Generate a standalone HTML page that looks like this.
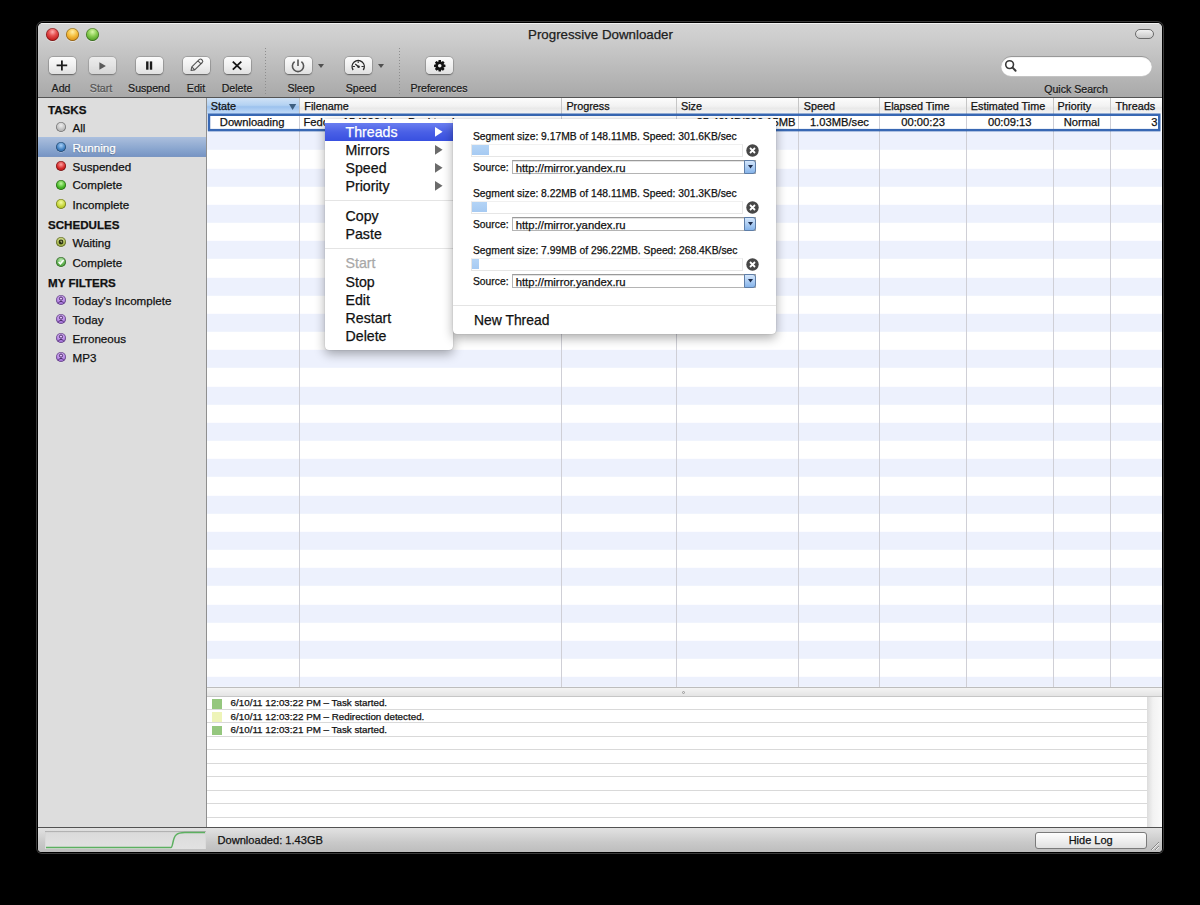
<!DOCTYPE html>
<html><head><meta charset="utf-8">
<style>
*{margin:0;padding:0;box-sizing:border-box}
html,body{width:1200px;height:905px;background:#000;overflow:hidden;font-family:"Liberation Sans",sans-serif;color:#111}
#win div{-webkit-text-stroke:0.25px currentColor}
.a{position:absolute}
.t{position:absolute;white-space:nowrap}
#win{position:absolute;left:38px;top:23px;width:1124px;height:829px;border-radius:5px 5px 4px 4px;overflow:hidden;background:#dedede;box-shadow:0 0 0 1px #000,0 0 0 2px #3a3a3a}
#tb{position:absolute;left:0;top:0;width:1124px;height:75px;background:linear-gradient(#d4d4d4,#cdcdcd 20%,#a9a9a9);border-top:1px solid #f2f2f2;border-bottom:1px solid #545454}
.light{position:absolute;width:13px;height:13px;border-radius:50%;box-shadow:inset 0 0 0 0.8px rgba(0,0,0,.35),0 1px 0 rgba(255,255,255,.5)}
.btn{position:absolute;width:27px;height:17px;border-radius:4px;background:linear-gradient(#fbfbfb,#f0f0f0 50%,#e0e0e0);box-shadow:0 0 0 0.6px rgba(0,0,0,.22),0 0.6px 1.4px rgba(0,0,0,.4)}
.lbl{position:absolute;font-size:10.6px;line-height:14px;text-align:center;color:#1a1a1a;white-space:nowrap;text-shadow:0 1px 0 rgba(255,255,255,.45)}
.sep{position:absolute;top:24px;width:1px;height:48px;background:repeating-linear-gradient(#8e8e8e 0 1px,transparent 1px 3px)}
#side{position:absolute;left:0;top:75px;width:169px;height:729px;background:#dddddd;border-right:1px solid #8f8f8f}
.sh{position:absolute;left:10px;font-size:11.6px;font-weight:bold;line-height:14px;color:#111}
.si{position:absolute;left:34.5px;font-size:11.6px;line-height:14px;color:#111}
.gel{position:absolute;left:18px;width:10px;height:10px;border-radius:50%;box-shadow:inset 0 0 0 0.8px rgba(0,0,0,.35),0 0.5px 0.5px rgba(255,255,255,.6)}
#hdr{position:absolute;left:169px;top:75px;width:955px;height:16px;background:linear-gradient(#fdfdfd,#f2f2f2 50%,#e9e9e9 65%,#f6f6f6)}
.hc{position:absolute;top:0;height:16px;border-right:1px solid #c9c9c9}
.ht{position:absolute;font-size:10.8px;line-height:14px;color:#111;white-space:nowrap}
#rows{position:absolute;left:169px;top:91px;width:955px;height:573px;background:repeating-linear-gradient(#fff 0,#fff 18.17px,#edf1fd 18.17px,#edf1fd 36.34px);background-position:0 -0.2px}
.vl{position:absolute;top:0;width:1px;height:573px;background:#cfcfd6}
.rt{position:absolute;font-size:11.2px;line-height:14px;color:#111;white-space:nowrap}
#menu{position:absolute;left:287px;top:96.3px;width:127.7px;height:231px;background:#fff;border-radius:0 0 4px 4px;box-shadow:0 4px 11px rgba(0,0,0,.33),0 0 1px rgba(0,0,0,.35)}
.mi{position:absolute;left:20.5px;font-size:14.2px;line-height:16px;color:#111;white-space:nowrap}
.arr{position:absolute;left:110px;width:0;height:0;border-top:4.5px solid transparent;border-bottom:4.5px solid transparent;border-left:7.5px solid #6b6b6b}
.msep{position:absolute;left:0;width:128px;height:1px;background:#e4e4e4}
#sub{position:absolute;left:415px;top:96.3px;width:323px;height:214.8px;background:#fff;border-radius:0 0 4px 4px;box-shadow:0 4px 11px rgba(0,0,0,.33),0 0 1px rgba(0,0,0,.35)}
.seg{position:absolute;left:20px;font-size:10.3px;line-height:12px;color:#111;white-space:nowrap}
.pb{position:absolute;left:18.3px;width:272px;height:12.5px;background:#fff;border:1px solid #e6e6e6;border-top-color:#f0f0f0}
.pf{position:absolute;left:0;top:0;height:9.6px;background:linear-gradient(#b4d4f6,#a6caf2)}
.xc{position:absolute;left:293px;width:12px;height:12px;border-radius:50%;background:#474747;color:#fff;font-size:11px;line-height:12px;text-align:center;font-weight:bold}
.src{position:absolute;left:20px;font-size:10.3px;line-height:12px;color:#111}
.dd{position:absolute;left:58.5px;width:244px;height:14px;border:1px solid #b4b4b4;border-top:1.5px solid #9a9a9a;background:#fff;box-shadow:inset 0 1px 0 #e4e4e4}
.ddt{position:absolute;left:3.2px;top:0;font-size:11.3px;line-height:14px;color:#111;white-space:nowrap}
.dda{position:absolute;right:-1px;top:-1px;width:12px;height:14px;border-radius:0 3px 3px 0;background:linear-gradient(#d4e6fb,#86b4ea);border:1px solid #5e7ea8}
#split{position:absolute;left:169px;top:664px;width:955px;height:10px;background:linear-gradient(#f4f4f4,#e4e4e4);border-top:1px solid #bdbdbd;border-bottom:1px solid #c6c6c6}
#log{position:absolute;left:169px;top:674px;width:955px;height:130px;background:#fff}
.ll{position:absolute;left:0;width:940px;height:1px;background:#d9d9d9}
.lt{position:absolute;left:23.6px;font-size:9.8px;line-height:12px;color:#111;white-space:nowrap}
.lsq{position:absolute;left:5px;width:10px;height:9.5px}
#status{position:absolute;left:0;top:804px;width:1124px;height:25px;background:linear-gradient(#e2e2e2,#c9c9c9 60%,#bdbdbd);border-top:1px solid #525252}
</style></head><body>
<div id="win">
  <div id="tb">
    <div class="light" style="left:8px;top:3.5px;background:radial-gradient(circle at 50% 30%,#ffb0b0 0,#e55050 35%,#c01818 75%,#8a1010 100%)"></div>
    <div class="light" style="left:28px;top:3.5px;background:radial-gradient(circle at 50% 30%,#fff0a8 0,#f5c040 40%,#d88a10 80%,#9a6008 100%)"></div>
    <div class="light" style="left:48px;top:3.5px;background:radial-gradient(circle at 50% 30%,#d8f8a8 0,#88cc50 40%,#4a9a20 80%,#2e6a10 100%)"></div>
    <div class="t" style="left:0;width:1124px;text-align:center;top:2px;font-size:13.3px;line-height:18px;color:#202020;padding-left:1px">Progressive Downloader</div>
    <div class="a" style="left:1097px;top:5.3px;width:19px;height:9.6px;border-radius:5px;border:1px solid #6a6a6a;background:linear-gradient(#f0f0f0,#c8c8c8)"></div>

    <div class="btn" style="left:11px;top:33px"></div>
    <div class="btn" style="left:51px;top:33px;opacity:.75"></div>
    <div class="btn" style="left:98px;top:33px"></div>
    <div class="btn" style="left:144.5px;top:33px"></div>
    <div class="btn" style="left:186px;top:33px"></div>
    <div class="sep" style="left:227px"></div>
    <div class="btn" style="left:247px;top:33px"></div>
    <div class="a" style="left:280px;top:40px;width:0;height:0;border-left:3.5px solid transparent;border-right:3.5px solid transparent;border-top:4px solid #505050"></div>
    <div class="btn" style="left:307px;top:33px"></div>
    <div class="a" style="left:340px;top:40px;width:0;height:0;border-left:3.5px solid transparent;border-right:3.5px solid transparent;border-top:4px solid #505050"></div>
    <div class="sep" style="left:361px"></div>
    <div class="btn" style="left:388px;top:33px"></div>


    <svg class="a" style="left:0;top:0" width="1124" height="74" viewBox="0 0 1124 74">
      <path d="M18.6 41.4 H29.2 M23.9 36.4 V46.4" stroke="#1c1c1c" stroke-width="1.8" fill="none"/>
      <path d="M61.4 38.3 L67.9 42 L61.4 45.8 Z" fill="#5a5a5a"/>
      <rect x="108.1" y="37.4" width="2.4" height="8.3" fill="#1a1a1a"/>
      <rect x="111.8" y="37.4" width="2.4" height="8.3" fill="#1a1a1a"/>
      <path d="M153 46.5 L153.8 42.8 L161.4 35.4 Q162.6 34.5 163.6 35.5 L164.4 36.3 Q165.3 37.4 164.3 38.5 L156.7 45.9 Z M153.8 42.8 L156.7 45.9 M160 36.8 L163 39.8" stroke="#555" stroke-width="1.1" fill="none" stroke-linejoin="round"/>
      <path d="M194.8 37.6 L203.3 45.6 M203.3 37.6 L194.8 45.6" stroke="#151515" stroke-width="1.8" fill="none"/>
      <path d="M256.6 37.6 A5.6 5.6 0 1 0 263.4 37.6" stroke="#555" stroke-width="1.6" fill="none"/>
      <path d="M260 35.6 V42" stroke="#555" stroke-width="1.6" fill="none"/>
      <path d="M315.1 46 A6.1 6.1 0 1 1 325.3 46" stroke="#2a2a2a" stroke-width="1.4" fill="none"/>
      <path d="M314.6 42.5 H316.9 M323.5 42.5 H325.8 M320.2 37.3 V38.9" stroke="#2a2a2a" stroke-width="1.1" fill="none"/>
      <path d="M317.2 40.1 L320.6 42.7" stroke="#2a2a2a" stroke-width="1.3" fill="none"/>
      <circle cx="320.6" cy="42.7" r="1.3" fill="#2a2a2a"/>
      <path d="M407.43 40.65 L407.43 42.95 L405.68 43.28 L405.58 43.53 L406.58 45.00 L404.95 46.63 L403.48 45.63 L403.23 45.73 L402.90 47.48 L400.60 47.48 L400.27 45.73 L400.02 45.63 L398.55 46.63 L396.92 45.00 L397.92 43.53 L397.82 43.28 L396.07 42.95 L396.07 40.65 L397.82 40.32 L397.92 40.07 L396.92 38.60 L398.55 36.97 L400.02 37.97 L400.27 37.87 L400.60 36.12 L402.90 36.12 L403.23 37.87 L403.48 37.97 L404.95 36.97 L406.58 38.60 L405.58 40.07 L405.68 40.32 Z M403.55 41.8 A1.8 1.8 0 1 0 399.95 41.8 A1.8 1.8 0 1 0 403.55 41.8 Z" fill="#111" fill-rule="evenodd"/>
    </svg>
    <div class="lbl" style="left:3px;width:40px;top:57.4px">Add</div>
    <div class="lbl" style="left:43px;width:40px;top:57.4px;color:#555">Start</div>
    <div class="lbl" style="left:80px;width:62px;top:57.4px">Suspend</div>
    <div class="lbl" style="left:138px;width:40px;top:57.4px">Edit</div>
    <div class="lbl" style="left:179px;width:40px;top:57.4px">Delete</div>
    <div class="lbl" style="left:243px;width:40px;top:57.4px">Sleep</div>
    <div class="lbl" style="left:303px;width:40px;top:57.4px">Speed</div>
    <div class="lbl" style="left:361px;width:80px;top:57.4px">Preferences</div>

    <div class="a" style="left:963px;top:31.5px;width:151px;height:20.5px;border-radius:10px;background:#fff;box-shadow:inset 0 1px 1px rgba(0,0,0,.45),0 0.5px 0 rgba(255,255,255,.4)"></div>
    <svg class="a" style="left:0;top:0" width="1124" height="74" viewBox="0 0 1124 74">
      <circle cx="971.6" cy="40.6" r="3.9" stroke="#3a3a3a" stroke-width="1.6" fill="none"/>
      <path d="M974.6 43.6 L977.6 46.7" stroke="#3a3a3a" stroke-width="2" fill="none" stroke-linecap="round"/>
    </svg>
    <div class="lbl" style="left:998px;width:80px;top:57.9px">Quick Search</div>
  </div>

  <div id="side">
<div class="sh" style="top:5.4px">TASKS</div>
<div class="a" style="left:0;top:39.0px;width:168px;height:20px;background:linear-gradient(#a9bddc,#8aa6cf 60%,#7895c4);border-top:1px solid #a9bfdf;border-bottom:1px solid #7a96c2"></div>
<div class="gel" style="top:24.4px;background:radial-gradient(circle at 50% 35%,#eeeeee 0,#c0c0c0 50%,#929292 100%)"></div><div class="si" style="top:23.2px;color:#111;">All</div>
<div class="gel" style="top:43.8px;background:radial-gradient(circle at 50% 35%,#a8d0f8 0,#4080c0 50%,#245088 100%)"></div><div class="si" style="top:42.6px;color:#fff;text-shadow:0 1px 1px rgba(0,0,0,.35);">Running</div>
<div class="gel" style="top:62.9px;background:radial-gradient(circle at 50% 35%,#ffa0a0 0,#d42828 50%,#8a1010 100%)"></div><div class="si" style="top:61.7px;color:#111;">Suspended</div>
<div class="gel" style="top:81.6px;background:radial-gradient(circle at 50% 35%,#c0f8a0 0,#48b828 50%,#247810 100%)"></div><div class="si" style="top:80.4px;color:#111;">Complete</div>
<div class="gel" style="top:100.8px;background:radial-gradient(circle at 50% 35%,#f4fca0 0,#c4d438 50%,#80900e 100%)"></div><div class="si" style="top:99.6px;color:#111;">Incomplete</div>
<div class="sh" style="top:120.0px">SCHEDULES</div>
<div class="gel" style="top:139.4px;background:radial-gradient(circle at 50% 35%,#e8f0b0 0,#a8b850 50%,#6a7a20 100%)"></div><div class="si" style="top:138.2px;color:#111;">Waiting</div><svg class="a" style="left:18px;top:139.4px" width="10" height="10" viewBox="0 0 10 10"><circle cx="5" cy="5" r="2.4" fill="#2a3010"/><path d="M5 3.6 V5 H6.2" stroke="#e0e8a0" stroke-width=".8" fill="none"/></svg>
<div class="gel" style="top:158.7px;background:radial-gradient(circle at 50% 35%,#c8f0c0 0,#60b050 50%,#308a20 100%)"></div><div class="si" style="top:157.5px;color:#111;">Complete</div><svg class="a" style="left:18px;top:158.7px" width="10" height="10" viewBox="0 0 10 10"><path d="M2.6 5 L4.4 6.8 L7.6 3" stroke="#fff" stroke-width="1.5" fill="none"/></svg>
<div class="sh" style="top:177.5px">MY FILTERS</div>
<div class="gel" style="top:196.9px;background:radial-gradient(circle at 50% 35%,#ecd0ff 0,#b080e0 50%,#7a48b0 100%)"></div><div class="si" style="top:195.8px;color:#111;">Today's Incomplete</div><svg class="a" style="left:18px;top:196.9px" width="10" height="10" viewBox="0 0 10 10"><circle cx="5" cy="3.6" r="1.6" fill="none" stroke="#4a2a6a" stroke-width="1"/><path d="M2.2 8.2 Q5 4.6 7.8 8.2" fill="none" stroke="#4a2a6a" stroke-width="1"/></svg>
<div class="gel" style="top:215.7px;background:radial-gradient(circle at 50% 35%,#ecd0ff 0,#b080e0 50%,#7a48b0 100%)"></div><div class="si" style="top:214.5px;color:#111;">Today</div><svg class="a" style="left:18px;top:215.7px" width="10" height="10" viewBox="0 0 10 10"><circle cx="5" cy="3.6" r="1.6" fill="none" stroke="#4a2a6a" stroke-width="1"/><path d="M2.2 8.2 Q5 4.6 7.8 8.2" fill="none" stroke="#4a2a6a" stroke-width="1"/></svg>
<div class="gel" style="top:234.9px;background:radial-gradient(circle at 50% 35%,#ecd0ff 0,#b080e0 50%,#7a48b0 100%)"></div><div class="si" style="top:233.8px;color:#111;">Erroneous</div><svg class="a" style="left:18px;top:234.9px" width="10" height="10" viewBox="0 0 10 10"><circle cx="5" cy="3.6" r="1.6" fill="none" stroke="#4a2a6a" stroke-width="1"/><path d="M2.2 8.2 Q5 4.6 7.8 8.2" fill="none" stroke="#4a2a6a" stroke-width="1"/></svg>
<div class="gel" style="top:254.2px;background:radial-gradient(circle at 50% 35%,#ecd0ff 0,#b080e0 50%,#7a48b0 100%)"></div><div class="si" style="top:253.0px;color:#111;">MP3</div><svg class="a" style="left:18px;top:254.2px" width="10" height="10" viewBox="0 0 10 10"><circle cx="5" cy="3.6" r="1.6" fill="none" stroke="#4a2a6a" stroke-width="1"/><path d="M2.2 8.2 Q5 4.6 7.8 8.2" fill="none" stroke="#4a2a6a" stroke-width="1"/></svg>
  </div>
  <div id="hdr">
<div class="a" style="left:0;top:0;width:92.4px;height:16px;background:linear-gradient(#d0e2f6,#b4d2f2 45%,#9cc2ee 55%,#c4dcf8)"></div>
<svg class="a" style="left:81.6px;top:5.9px" width="8" height="7"><path d="M0 0 H7.2 L3.6 5.9 Z" fill="#3d5f80"/></svg>
<div class="a" style="left:92.00px;top:0;width:1px;height:16px;background:#c6c6c6"></div>
<div class="a" style="left:353.75px;top:0;width:1px;height:16px;background:#c6c6c6"></div>
<div class="a" style="left:468.75px;top:0;width:1px;height:16px;background:#c6c6c6"></div>
<div class="a" style="left:590.75px;top:0;width:1px;height:16px;background:#c6c6c6"></div>
<div class="a" style="left:671.50px;top:0;width:1px;height:16px;background:#c6c6c6"></div>
<div class="a" style="left:758.80px;top:0;width:1px;height:16px;background:#c6c6c6"></div>
<div class="a" style="left:845.60px;top:0;width:1px;height:16px;background:#c6c6c6"></div>
<div class="a" style="left:903.10px;top:0;width:1px;height:16px;background:#c6c6c6"></div>
<div class="ht" style="left:3.7px;top:0.65px">State</div>
<div class="ht" style="left:97.3px;top:0.65px">Filename</div>
<div class="ht" style="left:359.4px;top:0.65px">Progress</div>
<div class="ht" style="left:474.0px;top:0.65px">Size</div>
<div class="ht" style="left:596.7px;top:0.65px">Speed</div>
<div class="ht" style="left:677.0px;top:0.65px">Elapsed Time</div>
<div class="ht" style="left:763.8px;top:0.65px">Estimated Time</div>
<div class="ht" style="left:850.5px;top:0.65px">Priority</div>
<div class="ht" style="left:908.5px;top:0.65px">Threads</div>
  </div>
  <div id="rows">
<div class="vl" style="left:92.00px"></div>
<div class="vl" style="left:353.75px"></div>
<div class="vl" style="left:468.75px"></div>
<div class="vl" style="left:590.75px"></div>
<div class="vl" style="left:671.50px"></div>
<div class="vl" style="left:758.80px"></div>
<div class="vl" style="left:845.60px"></div>
<div class="vl" style="left:903.10px"></div>
<div class="rt" style="left:12.8px;top:0.80px">Downloading</div>
<div class="rt" style="left:96.5px;top:0.80px">Fedora-15-i386-Live-Desktop.iso</div>
<div class="rt" style="left:470.2px;width:118.3px;text-align:right;top:0.80px">25.46MB/296.15MB</div>
<div class="rt" style="left:591.9px;width:81.1px;text-align:center;top:0.80px">1.03MB/sec</div>
<div class="rt" style="left:673.0px;width:86.2px;text-align:center;top:0.80px">00:00:23</div>
<div class="rt" style="left:759.2px;width:87.0px;text-align:center;top:0.80px">00:09:13</div>
<div class="rt" style="left:846.2px;width:57.2px;text-align:center;top:0.80px">Normal</div>
<div class="rt" style="left:903.5px;width:47.0px;text-align:right;top:0.80px">3</div>
<svg class="a" style="left:-7px;top:-4px" width="970" height="30"><rect x="9.00" y="4.75" width="950.25" height="15.40" fill="none" stroke="#3868b4" stroke-width="2.5"/></svg>
  </div>
  <div id="menu">
<div class="a" style="left:0;top:3.90px;width:100%;height:17.55px;background:linear-gradient(#6a7ef0,#4a60e6 50%,#3850e0)"></div>
<div class="mi" style="top:4.30px;color:#fff">Threads</div>
<svg class="a" style="left:109.70px;top:7.85px" width="9" height="10"><path d="M0 0 L7.6 4.85 L0 9.7 Z" fill="#fff"/></svg>
<div class="mi" style="top:22.30px;color:#111">Mirrors</div>
<svg class="a" style="left:109.70px;top:25.85px" width="9" height="10"><path d="M0 0 L7.6 4.85 L0 9.7 Z" fill="#6b6b6b"/></svg>
<div class="mi" style="top:40.40px;color:#111">Speed</div>
<svg class="a" style="left:109.70px;top:43.95px" width="9" height="10"><path d="M0 0 L7.6 4.85 L0 9.7 Z" fill="#6b6b6b"/></svg>
<div class="mi" style="top:58.50px;color:#111">Priority</div>
<svg class="a" style="left:109.70px;top:62.05px" width="9" height="10"><path d="M0 0 L7.6 4.85 L0 9.7 Z" fill="#6b6b6b"/></svg>
<div class="mi" style="top:88.30px;color:#111">Copy</div>
<div class="mi" style="top:106.60px;color:#111">Paste</div>
<div class="mi" style="top:136.10px;color:#a8a8a8">Start</div>
<div class="mi" style="top:154.70px;color:#111">Stop</div>
<div class="mi" style="top:172.40px;color:#111">Edit</div>
<div class="mi" style="top:190.40px;color:#111">Restart</div>
<div class="mi" style="top:208.60px;color:#111">Delete</div>
<div class="msep" style="top:81.20px"></div>
<div class="msep" style="top:128.80px"></div>
  </div>
  <div id="sub">
<div class="seg" style="top:11.70px">Segment size: 9.17MB of 148.11MB. Speed: 301.6KB/sec</div>
<div class="pb" style="top:24.95px"><div class="pf" style="width:17.2px"></div></div>
<svg class="a" style="left:292.50px;top:24.30px" width="13" height="13"><circle cx="6.5" cy="6.5" r="6.2" fill="#474747"/><path d="M4 4 L9 9 M9 4 L4 9" stroke="#fff" stroke-width="1.8"/></svg>
<div class="src" style="top:42.60px">Source:</div>
<div class="dd" style="top:40.30px"><div class="ddt">http://mirror.yandex.ru</div><div class="dda"><svg class="a" style="left:3px;top:4.5px" width="6" height="5"><path d="M0 0 H5 L2.5 3.5 Z" fill="#1a2a4a"/></svg></div></div>
<div class="seg" style="top:68.70px">Segment size: 8.22MB of 148.11MB. Speed: 301.3KB/sec</div>
<div class="pb" style="top:81.95px"><div class="pf" style="width:15px"></div></div>
<svg class="a" style="left:292.50px;top:81.30px" width="13" height="13"><circle cx="6.5" cy="6.5" r="6.2" fill="#474747"/><path d="M4 4 L9 9 M9 4 L4 9" stroke="#fff" stroke-width="1.8"/></svg>
<div class="src" style="top:99.60px">Source:</div>
<div class="dd" style="top:97.30px"><div class="ddt">http://mirror.yandex.ru</div><div class="dda"><svg class="a" style="left:3px;top:4.5px" width="6" height="5"><path d="M0 0 H5 L2.5 3.5 Z" fill="#1a2a4a"/></svg></div></div>
<div class="seg" style="top:125.70px">Segment size: 7.99MB of 296.22MB. Speed: 268.4KB/sec</div>
<div class="pb" style="top:138.95px"><div class="pf" style="width:6.5px"></div></div>
<svg class="a" style="left:292.50px;top:138.30px" width="13" height="13"><circle cx="6.5" cy="6.5" r="6.2" fill="#474747"/><path d="M4 4 L9 9 M9 4 L4 9" stroke="#fff" stroke-width="1.8"/></svg>
<div class="src" style="top:156.60px">Source:</div>
<div class="dd" style="top:154.30px"><div class="ddt">http://mirror.yandex.ru</div><div class="dda"><svg class="a" style="left:3px;top:4.5px" width="6" height="5"><path d="M0 0 H5 L2.5 3.5 Z" fill="#1a2a4a"/></svg></div></div>
<div class="msep" style="top:185.95px;width:323px"></div>
<div class="mi" style="left:21px;top:192.25px;font-size:13.9px">New Thread</div>
  </div>
  <div id="split"><div class="a" style="left:475px;top:2.5px;width:3px;height:3px;border-radius:50%;border:0.5px solid #999"></div></div>
  <div id="log">
<div class="ll" style="top:12.00px"></div>
<div class="ll" style="top:25.47px"></div>
<div class="ll" style="top:38.94px"></div>
<div class="ll" style="top:52.41px"></div>
<div class="ll" style="top:65.88px"></div>
<div class="ll" style="top:79.35px"></div>
<div class="ll" style="top:92.82px"></div>
<div class="ll" style="top:106.29px"></div>
<div class="ll" style="top:119.76px"></div>
<div class="lsq" style="top:2.00px;background:#95c77e"></div>
<div class="lt" style="top:0.30px">6/10/11 12:03:22 PM – Task started.</div>
<div class="lsq" style="top:15.47px;background:#eef4b8"></div>
<div class="lt" style="top:13.77px">6/10/11 12:03:22 PM – Redirection detected.</div>
<div class="lsq" style="top:28.94px;background:#95c77e"></div>
<div class="lt" style="top:27.24px">6/10/11 12:03:21 PM – Task started.</div>
<div class="a" style="left:940px;top:0;width:15px;height:130px;background:linear-gradient(90deg,#dcdcdc,#f2f2f2 40%,#fafafa)"></div>
  </div>
  <div id="status">
<div class="a" style="left:6.7px;top:2.8px;width:161.1px;height:17.9px;background:linear-gradient(#dadada,#e2e2e2);box-shadow:inset 0 1px 1px rgba(0,0,0,.2)"></div>
<svg class="a" style="left:6.7px;top:2.8px" width="161" height="18" viewBox="0 0 161 18"><path d="M1 16.5 H126 C128 16.5 127.5 7 131 4 C133 2 135 1.5 140 1.5 H160" fill="none" stroke="#5cb060" stroke-width="1.5"/></svg>
<div class="t" style="left:179.5px;top:5.20px;font-size:11.1px;line-height:14px;color:#111">Downloaded: 1.43GB</div>
<div class="a" style="left:996.5px;top:4.0px;width:112.3px;height:16.6px;border-radius:3px;border:1px solid #7a7a7a;background:linear-gradient(#fdfdfd,#efefef 50%,#e0e0e0);font-size:11px;line-height:14.5px;text-align:center;color:#111">Hide Log</div>
<svg class="a" style="left:1110px;top:11px" width="12" height="12" viewBox="0 0 12 12"><path d="M11 3 L3 11 M11 7 L7 11" stroke="#888" stroke-width="1"/><path d="M11 4 L4 11 M11 8 L8 11" stroke="#eee" stroke-width="1"/></svg>
  </div>
</div>
</body></html>
